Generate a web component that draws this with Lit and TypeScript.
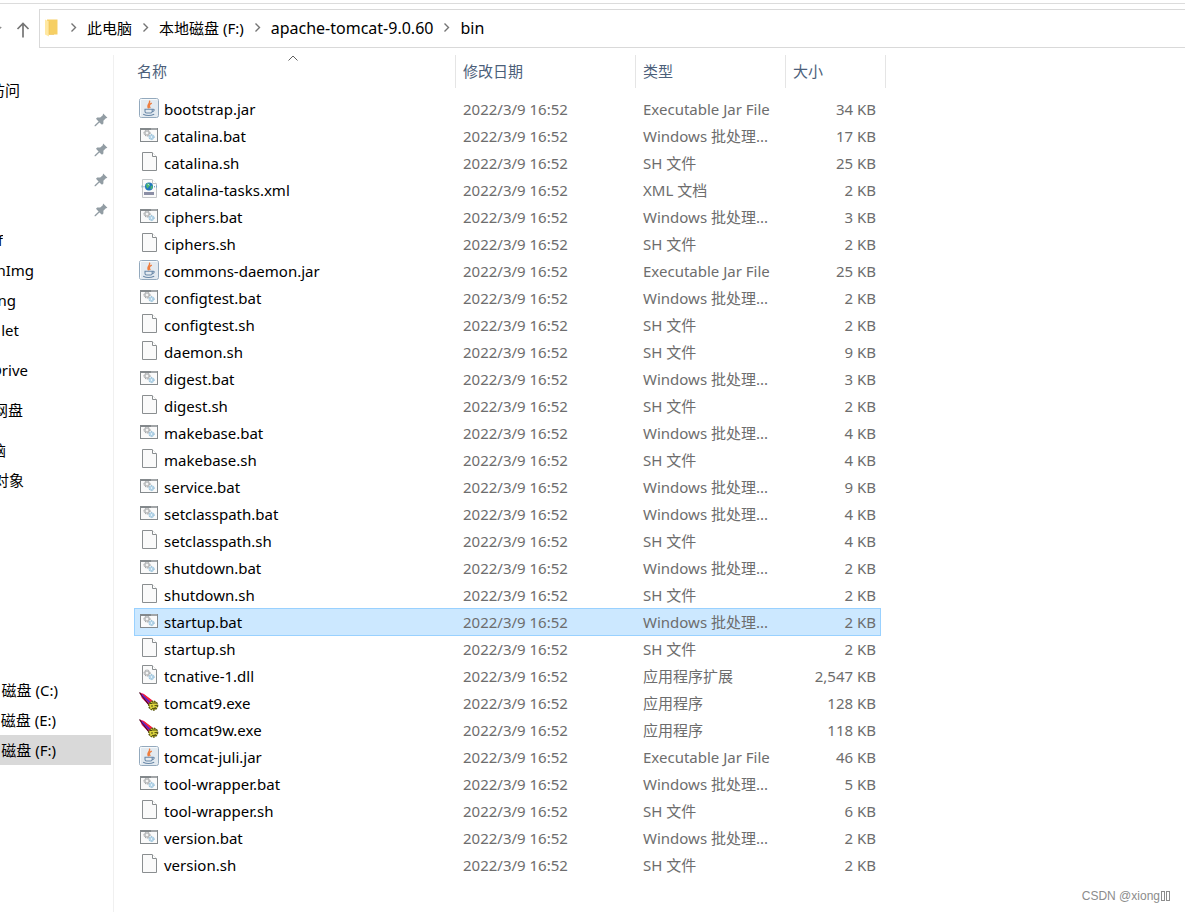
import { LitElement, html, css, svg, nothing } from "lit";
import { customElement } from "lit/decorators.js";
import { classMap } from "lit/directives/class-map.js";
import { styleMap } from "lit/directives/style-map.js";

type Kind = "jar" | "bat" | "sh" | "xml" | "dll" | "exe";

const TYPE_LABEL: Record<Kind, string> = {
  jar: "Executable Jar File",
  bat: "Windows 批处理...",
  sh: "SH 文件",
  xml: "XML 文档",
  dll: "应用程序扩展",
  exe: "应用程序",
};

const FILES: Array<[string, string]> = [
  ["bootstrap.jar", "34"],
  ["catalina.bat", "17"],
  ["catalina.sh", "25"],
  ["catalina-tasks.xml", "2"],
  ["ciphers.bat", "3"],
  ["ciphers.sh", "2"],
  ["commons-daemon.jar", "25"],
  ["configtest.bat", "2"],
  ["configtest.sh", "2"],
  ["daemon.sh", "9"],
  ["digest.bat", "3"],
  ["digest.sh", "2"],
  ["makebase.bat", "4"],
  ["makebase.sh", "4"],
  ["service.bat", "9"],
  ["setclasspath.bat", "4"],
  ["setclasspath.sh", "4"],
  ["shutdown.bat", "2"],
  ["shutdown.sh", "2"],
  ["startup.bat", "2"],
  ["startup.sh", "2"],
  ["tcnative-1.dll", "2,547"],
  ["tomcat9.exe", "128"],
  ["tomcat9w.exe", "118"],
  ["tomcat-juli.jar", "46"],
  ["tool-wrapper.bat", "5"],
  ["tool-wrapper.sh", "6"],
  ["version.bat", "2"],
  ["version.sh", "2"],
];

interface NavItem {
  label?: string;
  /** Visible part of the label, in pixels, while the tree is scrolled sideways. */
  shown?: number;
  pinned?: boolean;
  current?: boolean;
}

const NAV: NavItem[][] = [
  [
    { label: "访问", shown: 20 },
    { pinned: true },
    { pinned: true },
    { pinned: true },
    { pinned: true },
    { label: "f", shown: 3 },
    { label: "nImg", shown: 34 },
    { label: "ng", shown: 16 },
    { label: "let", shown: 19 },
  ],
  [{ label: "Drive", shown: 28 }],
  [{ label: "网盘", shown: 23 }],
  [
    { label: "脑", shown: 6 },
    { label: "对象", shown: 24 },
    {}, {}, {}, {}, {}, {},
    { label: "磁盘 (C:)", shown: 58 },
    { label: "磁盘 (E:)", shown: 56 },
    { label: "磁盘 (F:)", shown: 56, current: true },
  ],
];

const gear = (x: number, y: number, r: number, color: string, fill: string) => svg`
  <circle cx=${x} cy=${y} r=${r} fill=${fill} stroke=${color} stroke-width="1" stroke-dasharray="1 0.9"/>
  <circle cx=${x} cy=${y} r=${r - 1} fill=${fill} stroke=${color} stroke-width="0.6"/>`;

const gears = svg`
  ${gear(8, 8, 3, "#7d8184", "#f4f4f4")}
  ${gear(12.5, 12, 2.6, "#6fa6c9", "#e4f2fb")}`;

const page = svg`
  <path d="M3.5 0.5H13L17.5 5V18.5H3.5Z" fill="#fafafa" stroke="#8a8e90"/>
  <path d="M13.5 0.5V4.5H17.5" fill="#fff" stroke="#8a8e90"/>`;

const ICONS: Record<Kind, unknown> = {
  jar: svg`
    <rect x="0.5" y="0.5" width="19" height="19" rx="2" fill="#e3eaf0" stroke="#93a9bd"/>
    <path d="M1.5 18.5V1.5H18.5" fill="none" stroke="#f7fafc"/>
    <path d="M10.4 2.6C12.2 5.2 7 6.4 9.6 10.4M12.8 5.2C10.2 6.4 9.6 7.6 11.2 10" fill="none" stroke="#ee7d3e" stroke-width="1.4"/>
    <path d="M6 11.2H13.2V13.4Q13.2 15 11.6 15H7.6Q6 15 6 13.4ZM13.2 11.4Q15.8 11 15 12.6Q14.6 13.6 13 13.6" fill="none" stroke="#6988a8" stroke-width="1.1"/>
    <path d="M4.2 16.2Q9.4 18.8 15.2 16.2" fill="none" stroke="#6988a8" stroke-width="1.2"/>`,
  bat: svg`
    <rect x="1.5" y="3.5" width="17" height="13" fill="#fafafa" stroke="#84898c"/>
    <path d="M1 4H19" stroke="#84898c" stroke-width="2"/>
    <path d="M12.5 4H13.5M14.5 4H15.5M16.5 4H17.5" stroke="#fff" stroke-width="1"/>
    ${gears}`,
  sh: page,
  xml: svg`
    <path d="M3.5 0.5H13L17.5 5V18.5H3.5Z" fill="#fafafa" stroke="#c3c6c8"/>
    <path d="M13.5 0.5V4.5H17.5" fill="#fff" stroke="#c3c6c8"/>
    <circle cx="10" cy="7.5" r="4" fill="#2176bd"/>
    <path d="M7 5.4Q9.4 3.2 10.8 4.8Q11.4 7 9.4 8.2Q9 10.4 7.6 8.6ZM11.8 7L13.8 6.4L13.2 9.6L11.4 10.4Z" fill="#4db86b"/>
    <path d="M8.6 5L10.4 6.2" stroke="#b9e4f5"/>
    <path d="M3 6.5V8.5M5 7V8.4M15.5 7V8.4M17.5 6.5V8.5" stroke="#78a5c4"/>
    <rect x="5" y="13" width="10" height="3" fill="#8b8ea5"/>`,
  dll: svg`${page}${gears}`,
  exe: svg`
    <path d="M0.5 0.5L4.5 1.8L13.5 8.6L9.6 13L2.8 6Z" fill="#ee1668"/>
    <path d="M0.5 0.5L10 13" stroke="#3a1020" stroke-width="1.2"/>
    <path d="M3 2.8L11 10.8" stroke="#5a20c8" stroke-width="1.6"/>
    <path d="M4.5 2.6L12.4 8.8" stroke="#f82c28" stroke-width="1.2"/>
    <circle cx="14.2" cy="13.6" r="4.4" fill="#ddd53e" stroke="#5c5a10" stroke-width="1.4" stroke-dasharray="1.8 0.8"/>
    <path d="M11 11.5H13M15 11H17M12 14H14M15.5 13.6H18M13 16.4H16M14 9.8V12M16.2 15V17" stroke="#4f4c10" stroke-width="1"/>`,
};

const chevron = html`<svg class="chevron" viewBox="0 0 7 9" width="7" height="9" aria-hidden="true">
  <path d="M1.5 0.5L5.5 4.5L1.5 8.5" fill="none" stroke="#747474" stroke-width="1.4"/></svg>`;

const pin = html`<svg class="pin" viewBox="0 0 14 14" width="14" height="14" aria-hidden="true">
  <path d="M9.2 0.6L13.4 4.8L11.6 5.4L9.4 7.8L9.4 10.6L8 11.8L5.4 9.4L1.6 13.2L0.6 13.2L0.6 12.2L4.6 8.4L2 5.8L3.2 4.6L6.2 4.6L8.6 2.4Z" fill="#929da4"/></svg>`;

@customElement("explorer-address")
export class ExplorerAddress extends LitElement {
  static styles = css`
    :host { display: block; border-top: 1px solid #dcdcdc; }
    .bar { display: flex; padding-top: 5px; }
    .nav { display: flex; align-items: center; width: 39px; flex: none; }
    .step { border: 0; padding: 2px 0 0; background: none; display: flex; }
    .back { width: 16px; padding: 0; }
    .path {
      flex: 1; display: flex; align-items: center; height: 35px; padding: 0 0 2px 5px;
      border: 1px solid #d9d9d9; border-right: 0;
    }
    .folder { flex: none; margin-right: 12px; }
    .chevron { flex: none; margin: 0 10px; }
    .folder + .chevron { margin-left: 0; }
    a { color: #000; text-decoration: none; white-space: nowrap; }
    .latin { font-size: 16px; line-height: 22px; }
  `;

  render() {
    const crumbs = ["此电脑", "本地磁盘 (F:)", "apache-tomcat-9.0.60", "bin"];
    return html`
      <div class="bar">
        <div class="nav">
          <button class="step back" aria-label="最近浏览的位置">
            <svg viewBox="0 0 4 6" width="4" height="6"><path d="M-2 4L1.2 1" fill="none" stroke="#8a8a8a" stroke-width="1.4"/></svg>
          </button>
          <button class="step" aria-label="上移">
            <svg viewBox="0 0 14 16" width="14" height="16"><path d="M7 15.5V1.5M1.5 7L7 1.5L12.5 7" fill="none" stroke="#757575" stroke-width="1.7"/></svg>
          </button>
        </div>
        <nav class="path">
          <svg class="folder" viewBox="0 0 13 18" width="13" height="18" aria-hidden="true">
            <path d="M2 0.5H12.5V15.5H2Z" fill="#f6cf64"/>
            <path d="M0 0.5L4 2.5V17.5L0 15.5Z" fill="#ffe8a2"/>
            <path d="M4 2.5V15.5H9" fill="none" stroke="#eebf52" stroke-width="0.6"/>
          </svg>
          ${crumbs.map((c) => html`${chevron}<a href="#" class=${classMap({ latin: /^[a-z]/.test(c) })}>${c}</a>`)}
        </nav>
      </div>`;
  }
}

@customElement("explorer-tree")
export class ExplorerTree extends LitElement {
  static styles = css`
    :host { display: block; border-right: 1px solid #f0f0f0; padding: 20px 2px 0 0; overflow: hidden; }
    .group { list-style: none; margin: 0 0 10px; padding: 0; }
    .item { display: flex; align-items: center; height: 30px; }
    .current { background: #d9d9d9; }
    a { display: flex; justify-content: flex-end; overflow: hidden; color: #000; text-decoration: none; white-space: nowrap; }
    .pin { margin-left: auto; margin-right: 3px; }
  `;

  render() {
    return NAV.map((group) => html`<ul class="group">
      ${group.map((i) => html`<li class=${classMap({ item: true, current: !!i.current })}>
        ${i.label ? html`<a href="#" style=${styleMap({ width: `${i.shown}px` })}>${i.label}</a>` : nothing}
        ${i.pinned ? pin : nothing}
      </li>`)}
    </ul>`);
  }
}

@customElement("explorer-files")
export class ExplorerFiles extends LitElement {
  static styles = css`
    :host { display: block; padding-left: 16px; }
    table { display: block; border-spacing: 0; }
    thead, tbody { display: block; }
    tr { display: grid; align-items: center; }
    thead tr { grid-template-columns: 326px 180px 150px 100px; }
    tbody { margin: 7px 0 0 4px; }
    tbody tr {
      grid-template-columns: 321px 180px 150px 94px; width: 745px;
      padding: 2px 0; margin-bottom: -1px; border: 1px solid transparent;
    }
    th {
      position: relative; padding: 0 7px; height: 33px; line-height: 33px; text-align: left;
      font-weight: 400; color: #4c607a; border-right: 1px solid #e5e5e5;
    }
    td { padding: 0 7px; height: 22px; line-height: 22px; color: #6d6d6d; white-space: nowrap; }
    .name { display: flex; align-items: flex-start; gap: 5px; padding-left: 4px; color: #000; }
    .size { text-align: right; padding-right: 4px; }
    .selected { background: #cce8ff; border-color: #99d1ff; }
    .icon { flex: none; }
    .sort { position: absolute; top: 0; left: 50%; margin-left: -5px; }
  `;

  render() {
    return html`<table>
      <thead><tr>
        <th scope="col">名称<svg class="sort" viewBox="0 0 10 7" width="10" height="7" aria-hidden="true"><path d="M0.5 5.5L5 1L9.5 5.5" fill="none" stroke="#606060"/></svg></th>
        <th scope="col">修改日期</th><th scope="col">类型</th><th scope="col">大小</th>
      </tr></thead>
      <tbody>
        ${FILES.map(([name, size]) => {
          const kind = name.split(".").pop() as Kind;
          return html`<tr class=${classMap({ selected: name === "startup.bat" })}>
            <td class="name"><svg class="icon" viewBox="0 0 20 20" width="20" height="20" aria-hidden="true">${ICONS[kind]}</svg>${name}</td>
            <td>2022/3/9 16:52</td>
            <td>${TYPE_LABEL[kind]}</td>
            <td class="size">${size} KB</td>
          </tr>`;
        })}
      </tbody>
    </table>`;
  }
}

@customElement("app-root")
export class AppRoot extends LitElement {
  static styles = css`
    :host {
      display: flex; flex-direction: column; position: relative; min-height: 100vh; box-sizing: border-box;
      padding-top: 3px; overflow: hidden; background: #fff;
      font: 15px/20px "Noto Sans", "Noto Sans CJK SC", sans-serif;
    }
    .body { flex: 1; display: grid; grid-template-columns: 114px 1fr; margin-top: 7px; }
    .mark {
      position: absolute; right: 15px; bottom: 8px; display: flex; align-items: center;
      font: 12px/16px "Liberation Sans", sans-serif; color: #8c8c8c;
    }
    .tofu { width: 2px; height: 8px; margin-left: 1px; border: 1px solid #8c8c8c; }
  `;

  render() {
    return html`
      <explorer-address></explorer-address>
      <div class="body">
        <explorer-tree></explorer-tree>
        <explorer-files></explorer-files>
      </div>
      <div class="mark">CSDN @xiong<span class="tofu"></span><span class="tofu"></span></div>`;
  }
}
